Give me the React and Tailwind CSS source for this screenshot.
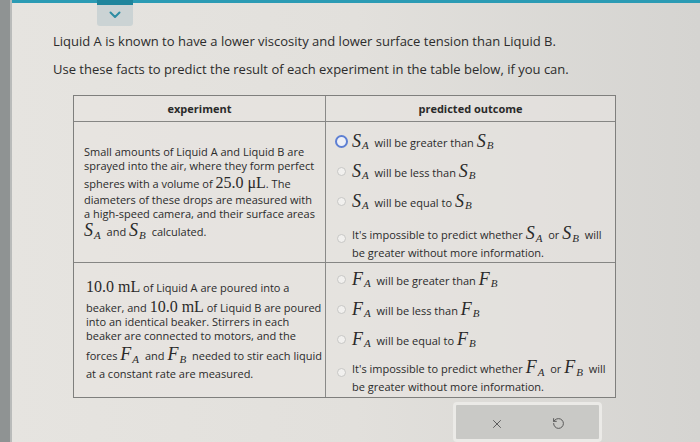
import React from 'react';
import { X, RotateCcw } from 'lucide-react';

const M = ({ v, s }) => (
  <span className="font-['Liberation_Serif','Times_New_Roman',serif] italic text-[18px] leading-none text-[#2a2a2a]">
    {v}
    <sub className="text-[11px] italic ml-[1px] mr-[3px]">{s}</sub>
  </span>
);

const Num = ({ children }) => (
  <span className="font-['Liberation_Serif',serif] text-[16px] leading-none text-[#2a2a2a]">{children}</span>
);

const Radio = ({ selected }) => (
  <div className="w-[20px] h-[16px] shrink-0 flex items-center justify-center">
    {selected ? (
      <div className="w-[13px] h-[13px] rounded-full border-[2.5px] border-[#5d7fd3] bg-[#eef0f6]" />
    ) : (
      <div className="w-[9px] h-[9px] rounded-full border border-[#c7c7c5] bg-[#f1f0ee]" />
    )}
  </div>
);

const Option = ({ selected, children }) => (
  <div className="h-[30px] flex items-center gap-[1px]">
    <Radio selected={selected} />
    <div className="text-[11px] font-medium text-[#2b2b2b] whitespace-nowrap">{children}</div>
  </div>
);

const Impossible = ({ v, mt }) => (
  <div className={`flex items-start gap-[1px] ${mt}`}>
    <div className="pt-[6px]"><Radio /></div>
    <div className="text-[11px] font-medium text-[#2b2b2b] leading-[18px] whitespace-nowrap">
      <div>It's impossible to predict whether <M v={v} s="A" /> or <M v={v} s="B" /> will</div>
      <div>be greater without more information.</div>
    </div>
  </div>
);

export default function App() {
  return (
    <div className="w-[700px] h-[442px] overflow-hidden flex font-['Open_Sans',sans-serif] text-[#353535]">
      <div className="w-[12px] shrink-0 bg-[#8f9393] border-r-2 border-[#b9bbba]" />
      <div className="flex-1 flex flex-col bg-linear-to-r from-[#e6e4e0] via-[#e2e0dc] to-[#d5d4d1]">
        <div className="h-[5px] bg-[#2b9bb4] relative">
          <div className="absolute left-[85px] top-0 w-[36px] h-[5px] bg-[#1f859c]" />
        </div>
        <div className="pl-[85px]">
          <div className="w-[36px] h-[23px] rounded-b-[3px] bg-[#cbd3d4] flex items-center justify-center">
            <svg width="12" height="8" viewBox="0 0 12 8">
              <path d="M1.5 1.5 L6 6 L10.5 1.5" fill="none" stroke="#2e8da3" strokeWidth="2" strokeLinecap="round" strokeLinejoin="round" />
            </svg>
          </div>
        </div>

        <div className="pl-[41px] text-[13px] leading-[18px] font-medium text-[#2c2c2c]">
          <p className="mt-[6px]">Liquid A is known to have a lower viscosity and lower surface tension than Liquid B.</p>
          <p className="mt-[10px]">Use these facts to predict the result of each experiment in the table below, if you can.</p>
        </div>

        <div className="ml-[61px] mt-[17px] w-[543px] border border-[#7f7f7d] bg-[#e7e5e1]/60">
          <div className="grid grid-cols-[252px_1fr] h-[26px] border-b border-[#868684] text-[11px] font-bold text-[#2a2a2a]">
            <div className="flex items-center justify-center border-r border-[#8a8a88]">experiment</div>
            <div className="flex items-center justify-center">predicted outcome</div>
          </div>

          <div className="grid grid-cols-[252px_1fr] border-b border-[#868684]">
            <div className="border-r border-[#8a8a88] flex items-center pl-[10px] pr-[4px]">
              <div className="text-[11px] leading-[14px] font-medium text-[#2b2b2b] whitespace-nowrap">
                <div>Small amounts of Liquid A and Liquid B are</div>
                <div>sprayed into the air, where they form perfect</div>
                <div className="mt-[2px]">spheres with a volume of <Num>25.0 μL</Num>. The</div>
                <div className="mt-[2px]">diameters of these drops are measured with</div>
                <div>a high-speed camera, and their surface areas</div>
                <div><M v="S" s="A" /> and <M v="S" s="B" /> calculated.</div>
              </div>
            </div>
            <div className="pl-[5px] pt-[4px]">
              <Option selected><M v="S" s="A" /> will be greater than <M v="S" s="B" /></Option>
              <Option><M v="S" s="A" /> will be less than <M v="S" s="B" /></Option>
              <Option><M v="S" s="A" /> will be equal to <M v="S" s="B" /></Option>
              <Impossible v="S" mt="mt-[8px]" />
            </div>
          </div>

          <div className="grid grid-cols-[252px_1fr]">
            <div className="border-r border-[#8a8a88] flex items-center pl-[12px] pr-[4px]">
              <div className="text-[11px] leading-[14px] font-medium text-[#2b2b2b] whitespace-nowrap">
                <div className="mb-[4px]"><Num>10.0 mL</Num> of Liquid A are poured into a</div>
                <div>beaker, and <Num>10.0 mL</Num> of Liquid B are poured</div>
                <div>into an identical beaker. Stirrers in each</div>
                <div>beaker are connected to motors, and the</div>
                <div className="mt-[2px]">forces <M v="F" s="A" /> and <M v="F" s="B" /> needed to stir each liquid</div>
                <div className="mt-[4px]">at a constant rate are measured.</div>
              </div>
            </div>
            <div className="pl-[5px] pt-[1px] pb-[1px]">
              <Option><M v="F" s="A" /> will be greater than <M v="F" s="B" /></Option>
              <Option><M v="F" s="A" /> will be less than <M v="F" s="B" /></Option>
              <Option><M v="F" s="A" /> will be equal to <M v="F" s="B" /></Option>
              <Impossible v="F" mt="mt-[4px]" />
            </div>
          </div>
        </div>

        <div className="ml-[441px] mt-[4px] w-[149px] h-[50px] rounded-[4px] border-[3px] border-[#ebeae7] bg-[#c9c9c6] flex items-start pt-[12px]">
          <div className="flex-1 flex justify-center pl-[10px]">
            <X size={14} strokeWidth={1.6} color="#555" />
          </div>
          <div className="flex-1 flex justify-center pr-[10px]">
            <RotateCcw size={13} strokeWidth={1.8} color="#555" />
          </div>
        </div>
      </div>
    </div>
  );
}
